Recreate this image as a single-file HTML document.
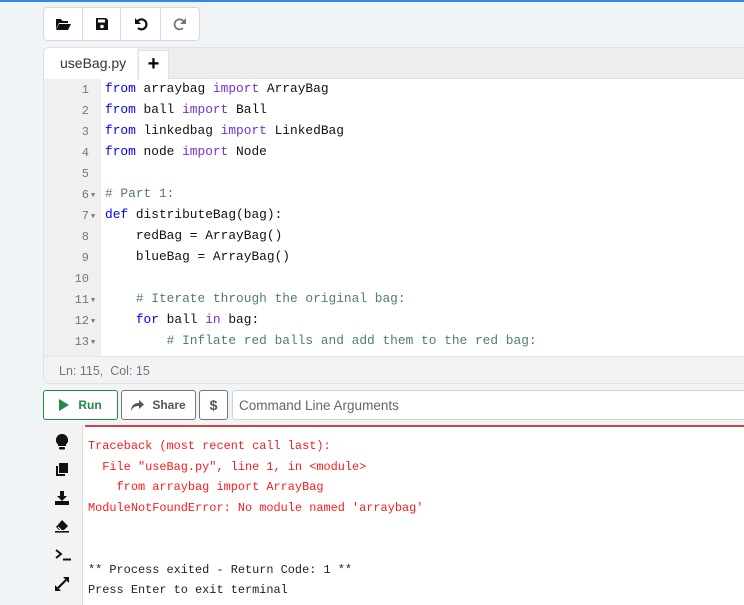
<!DOCTYPE html>
<html><head><style>
*{box-sizing:border-box;margin:0;padding:0}
body{width:744px;height:596px;overflow:hidden;background:#f1f4f7;font-family:"Liberation Sans",sans-serif;position:relative}
.topl{position:absolute;left:0;top:0;width:744px;height:2px;background:#2e8ae6}
.tb{position:absolute;left:43px;top:7px;height:34px;width:157px;border:1px solid #d6dade;border-radius:4px;background:#fff;display:flex}
.tb div{border-right:1px solid #d6dade;display:flex;align-items:center;justify-content:center}
.ed{position:absolute;left:43px;top:47px;width:710px;height:337px;background:#fff;border:1px solid #dde1e5;border-radius:6px;overflow:hidden}
.tabs{height:31px;background:#ebedef;border-bottom:1px solid #dde1e5;position:relative}
.tab{position:absolute;left:0;top:0;width:93px;height:31px;background:#fff;font-size:14px;color:#333;padding:7px 0 0 16px}
.plus{position:absolute;left:94px;top:2px;width:31px;height:29px;background:#fff;border:1px solid #dde1e5;border-bottom:none;font-size:20px;font-weight:bold;text-align:center;line-height:27px}
.gut{position:absolute;left:0;top:31px;width:57px;height:277px;background:#f0f0f0}
.code{position:absolute;left:0;top:30px;font-family:"Liberation Mono",monospace;font-size:12.85px;line-height:21px}
.ln{position:absolute;left:0;width:45px;text-align:right;color:#777;font-size:12px}
.ar{position:absolute;left:47px;color:#777;font-size:7px}
.cl{position:absolute;left:61px;white-space:pre;color:#111}
.k{color:#0000ff}.i{color:#7a2fd8}.c{color:#4f7d72}
.st{position:absolute;left:0;top:308px;width:100%;height:29px;background:#f2f3f4;border-top:1px solid #e6e6e6;color:#777;font-size:12.5px;padding:7px 0 0 15px}
.btn{position:absolute;top:390px;height:30px;border:1px solid #777;border-radius:3px;background:#fff;font-size:12px;font-weight:bold;color:#555;display:flex;align-items:center;justify-content:center}
.term{position:absolute;left:43px;top:425px;width:710px;height:180px;background:#fff;border-radius:6px}
.side{position:absolute;left:0;top:0;width:40px;height:180px;background:#f2f3f4;border-right:1px solid #ddd}
.red{position:absolute;left:42px;top:0;right:0;height:2px;background:#cf4545}
.out{position:absolute;left:45px;top:11px;font-family:"Liberation Mono",monospace;font-size:11.9px;line-height:20.6px;white-space:pre;color:#222}
.r{color:#ff1a1a}
.ic{position:absolute;left:12px}
</style></head><body>
<div class="topl"></div>
<div class="tb">
<div style="width:39px"><svg width="16" height="13" viewBox="0 0 16 13"><path d="M1 1h5l1.5 2H13v2H4L1 11z" fill="#111"/><path d="M4 6h12l-3 6H1z" fill="#111"/></svg></div>
<div style="width:38px"><svg width="14" height="14" viewBox="0 0 14 14"><path d="M1 1h10l2 2v10H1z" fill="#111"/><rect x="3" y="2.5" width="7" height="3" fill="#fff"/><circle cx="7" cy="9.5" r="1.8" fill="#fff"/></svg></div>
<div style="width:40px"><svg width="14" height="14" viewBox="0 0 14 14"><path d="M3 5a5 5 0 1 1 1 6" stroke="#111" stroke-width="2.2" fill="none"/><path d="M1 1v6h6z" fill="#111"/></svg></div>
<div style="width:38px;border:none"><svg width="14" height="14" viewBox="0 0 14 14"><path d="M11 5a5 5 0 1 0-1 6" stroke="#777" stroke-width="1.8" fill="none"/><path d="M13 1v6H7z" fill="#777"/></svg></div>
</div>
<div class="ed">
<div class="tabs"><div class="tab">useBag.py</div><div class="plus">+</div></div>
<div class="gut"></div>
<div class="code">
<div class="ln" style="top:2px">1</div><div class="cl" style="top:0"><span class="k">from</span> arraybag <span class="i">import</span> ArrayBag</div>
<div class="ln" style="top:23px">2</div><div class="cl" style="top:21px"><span class="k">from</span> ball <span class="i">import</span> Ball</div>
<div class="ln" style="top:44px">3</div><div class="cl" style="top:42px"><span class="k">from</span> linkedbag <span class="i">import</span> LinkedBag</div>
<div class="ln" style="top:65px">4</div><div class="cl" style="top:63px"><span class="k">from</span> node <span class="i">import</span> Node</div>
<div class="ln" style="top:86px">5</div>
<div class="ln" style="top:107px">6</div><div class="ar" style="top:108px">▼</div><div class="cl c" style="top:105px"># Part 1:</div>
<div class="ln" style="top:128px">7</div><div class="ar" style="top:129px">▼</div><div class="cl" style="top:126px"><span class="k">def</span> distributeBag(bag):</div>
<div class="ln" style="top:149px">8</div><div class="cl" style="top:147px">    redBag = ArrayBag()</div>
<div class="ln" style="top:170px">9</div><div class="cl" style="top:168px">    blueBag = ArrayBag()</div>
<div class="ln" style="top:191px">10</div>
<div class="ln" style="top:212px">11</div><div class="ar" style="top:213px">▼</div><div class="cl c" style="top:210px">    # Iterate through the original bag:</div>
<div class="ln" style="top:233px">12</div><div class="ar" style="top:234px">▼</div><div class="cl" style="top:231px">    <span class="k">for</span> ball <span class="i">in</span> bag:</div>
<div class="ln" style="top:254px">13</div><div class="ar" style="top:255px">▼</div><div class="cl c" style="top:252px">        # Inflate red balls and add them to the red bag:</div>
</div>
<div class="st">Ln: 115,&nbsp; Col: 15</div>
</div>
<div class="btn" style="left:43px;width:75px;border-color:#1e8a4c;color:#1e8a4c"><svg width="10" height="12" style="margin-right:9px"><path d="M0 0L10 6L0 12z" fill="#1e8a4c"/></svg>Run</div>
<div class="btn" style="left:121px;width:75px"><svg width="13" height="11" style="margin-right:8px"><path d="M8 0l5 4.5L8 9V6C4 6 2 7 0 11 0 6 3 3 8 3z" fill="#555"/></svg>Share</div>
<div class="btn" style="left:199px;width:29px;font-size:14px">$</div>
<div class="btn" style="left:232px;width:520px;border-color:#d0d4d8;justify-content:flex-start;padding-left:6px;font-weight:normal;font-size:13.5px;color:#666">Command Line Arguments</div>
<div class="term">
<div class="side"></div>
<div class="red"></div>
<svg class="ic" style="top:9px" width="14" height="16" viewBox="0 0 14 16"><path d="M7 0a6 6 0 0 0-4 10.5V12h8v-1.5A6 6 0 0 0 7 0z" fill="#111"/><rect x="4" y="13" width="6" height="2.5" rx="1" fill="#111"/></svg>
<svg class="ic" style="top:38px" width="14" height="14" viewBox="0 0 14 14"><rect x="4" y="0" width="9" height="10" fill="#111"/><path d="M1 3h2v8h7v2H1z" fill="#111"/></svg>
<svg class="ic" style="top:66px" width="14" height="14" viewBox="0 0 14 14"><path d="M5 0h4v5h3L7 10 2 5h3z" fill="#111"/><rect x="0" y="10" width="14" height="4" fill="#111"/></svg>
<svg class="ic" style="top:95px" width="14" height="13" viewBox="0 0 14 13"><path d="M7 0l6 6-4 4H4L1 7z" fill="#111"/><path d="M3 7l3 3" stroke="#fff" stroke-width="1.2"/><rect x="0" y="11" width="14" height="1.6" fill="#111"/></svg>
<svg class="ic" style="top:124px" width="16" height="12" viewBox="0 0 16 12"><path d="M1 1l5 4-5 4" stroke="#111" stroke-width="2" fill="none"/><rect x="8" y="9.5" width="8" height="2" fill="#111"/></svg>
<svg class="ic" style="top:152px" width="14" height="14" viewBox="0 0 14 14"><path d="M8 0h6v6zM0 14V8l6 6z" fill="#111"/><path d="M3 11L11 3" stroke="#111" stroke-width="2.2"/></svg>
<div class="out"><span class="r">Traceback (most recent call last):
  File "useBag.py", line 1, in &lt;module&gt;
    from arraybag import ArrayBag
ModuleNotFoundError: No module named 'arraybag'</span>


** Process exited - Return Code: 1 **
Press Enter to exit terminal</div>
</div>
</body></html>
